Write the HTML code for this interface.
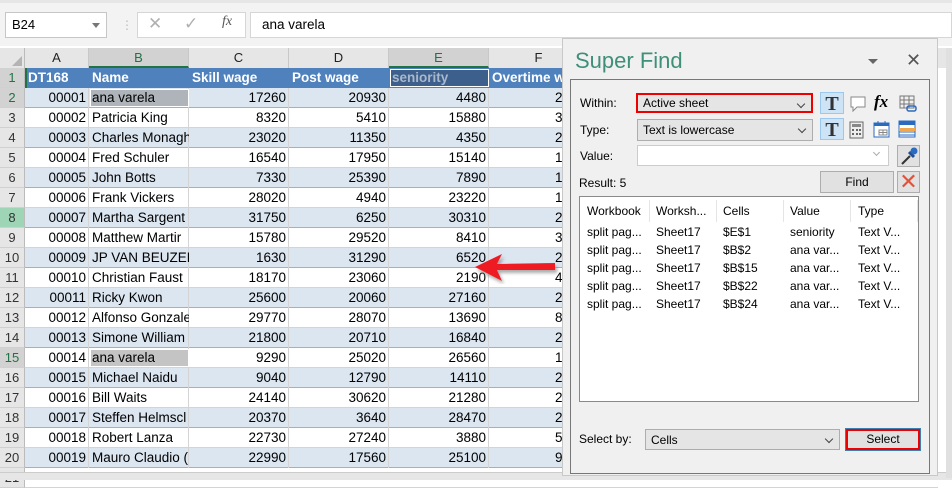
<!DOCTYPE html>
<html><head><meta charset="utf-8">
<style>
*{margin:0;padding:0;box-sizing:border-box}
body{width:952px;height:480px;overflow:hidden;background:#fff;font-family:"Liberation Sans",sans-serif;position:relative}
.a{position:absolute}
.cell{position:absolute;height:20px;line-height:20px;font-size:13.5px;color:#000;white-space:nowrap;overflow:hidden;padding:0 3px}
.r{text-align:right}
.rh{position:absolute;left:0;width:25px;height:20px;line-height:20px;text-align:center;font-size:13px;color:#333;background:#e6e6e6;border-bottom:1px solid #d0d0d0;border-right:1px solid #bbb}
.ch{position:absolute;top:48px;height:20px;line-height:20px;text-align:center;font-size:13px;color:#222;background:#e6e6e6;border-right:1px solid #c8c8c8}
.lbl{position:absolute;font-size:12px;color:#000}
.dd{position:absolute;background:#e5e5e5;border:1px solid #adadad;font-size:12px;line-height:20px;padding-left:5px;height:22px}
.dd:after{content:"";position:absolute;right:7px;top:6px;width:5px;height:5px;border-right:1px solid #444;border-bottom:1px solid #444;transform:rotate(45deg)}
.ib{position:absolute;width:24px;height:22px;text-align:center;font-family:"Liberation Serif",serif;font-weight:bold;font-size:20px;line-height:22px;color:#333}
.lt{position:absolute;font-size:12px;color:#000;white-space:nowrap}
</style></head><body>
<!-- ribbon/top -->
<div class="a" style="left:0;top:0;width:952px;height:46px;background:#f3f3f3"></div>
<div class="a" style="left:0;top:0;width:952px;height:3px;background:#e6e6e6"></div>
<div class="a" style="left:5px;top:12px;width:102px;height:26px;background:#fff;border:1px solid #c6c6c6;font-size:13px;line-height:24px;padding-left:6px">B24</div>
<div class="a" style="left:92px;top:23px;width:0;height:0;border-left:4px solid transparent;border-right:4px solid transparent;border-top:5px solid #777"></div>
<div class="a" style="left:121px;top:18px;color:#bbb;font-size:12px">⋮</div>
<div class="a" style="left:137px;top:12px;width:109px;height:26px;background:#fff;border:1px solid #d6d6d6"></div>
<div class="a" style="left:148px;top:14px;color:#b0b0b0;font-size:17px">✕</div>
<div class="a" style="left:184px;top:14px;color:#b0b0b0;font-size:17px">✓</div>
<div class="a" style="left:222px;top:14px;color:#555;font-size:14px;font-style:italic;font-family:'Liberation Serif',serif">fx</div>
<div class="a" style="left:250px;top:12px;width:702px;height:26px;background:#fff;border:1px solid #d6d6d6;font-size:13.5px;line-height:24px;padding-left:11px">ana varela</div>
<!-- column headers -->
<div class="a" style="left:0;top:48px;width:25px;height:20px;background:#e6e6e6;border-right:1px solid #bbb"></div>
<div class="a" style="left:12px;top:56px;width:0;height:0;border-left:10px solid transparent;border-bottom:10px solid #b4b4b4"></div>
<div class="ch" style="left:25px;width:64px">A</div>
<div class="ch" style="left:89px;width:100px;background:#d2d2d2;color:#217346;border-bottom:2px solid #217346">B</div>
<div class="ch" style="left:189px;width:100px">C</div>
<div class="ch" style="left:289px;width:100px">D</div>
<div class="ch" style="left:389px;width:100px;background:#d2d2d2;color:#217346;border-bottom:2px solid #217346">E</div>
<div class="ch" style="left:489px;width:100px">F</div>
<div class="ch" style="left:938px;width:14px"></div>
<div id="grid"></div>
<!-- header row 1 -->
<div class="a" style="left:25px;top:68px;width:540px;height:20px;background:#4f81bd"></div>
<div class="a" style="left:25px;top:68px;width:2px;height:400px;background:#217346"></div>
<div class="cell" style="left:25px;top:68px;color:#fff;font-weight:bold">DT168</div>
<div class="cell" style="left:89px;top:68px;color:#fff;font-weight:bold">Name</div>
<div class="cell" style="left:189px;top:68px;color:#fff;font-weight:bold">Skill wage</div>
<div class="cell" style="left:289px;top:68px;color:#fff;font-weight:bold">Post wage</div>
<div class="a" style="left:390px;top:69px;width:99px;height:18px;background:#3d5f8c;border:1px solid #fff"></div>
<div class="cell" style="left:389px;top:68px;color:#aab8cc;font-weight:bold">seniority</div>
<div class="cell" style="left:489px;top:68px;color:#fff;font-weight:bold">Overtime w</div>
<div id="rows"></div>
<script>
var d=[["00001","ana varela",17260,20930,4480,"2"],["00002","Patricia King",8320,5410,15880,"3"],["00003","Charles Monagh",23020,11350,4350,"2"],["00004","Fred Schuler",16540,17950,15140,"1"],["00005","John Botts",7330,25390,7890,"1"],["00006","Frank Vickers",28020,4940,23220,"1"],["00007","Martha Sargent",31750,6250,30310,"2"],["00008","Matthew Martir",15780,29520,8410,"3"],["00009","JP VAN BEUZEK(",1630,31290,6520,"2"],["00010","Christian Faust",18170,23060,2190,"4"],["00011","Ricky Kwon",25600,20060,27160,"2"],["00012","Alfonso Gonzale",29770,28070,13690,"8"],["00013","Simone William",21800,20710,16840,"2"],["00014","ana varela",9290,25020,26560,"1"],["00015","Michael Naidu",9040,12790,14110,"2"],["00016","Bill Waits",24140,30620,21280,"2"],["00017","Steffen Helmscl",20370,3640,28470,"2"],["00018","Robert Lanza",22730,27240,3880,"5"],["00019","Mauro Claudio (",22990,17560,25100,"9"]];
var h="";
h+='<div class="rh" style="top:68px;background:#d2d2d2;color:#217346">1</div>';
for(var i=0;i<20;i++){var n=i+2,t=68+(i+1)*20;
 var bg=(i%2==0)?"#dce6f1":"#fff";
 h+='<div class="a" style="left:25px;top:'+t+'px;width:913px;height:20px;background:'+(t<468?bg:"#fff")+';border-bottom:1px solid '+(i%2==0?"#95b3d7":"#d4d4d4")+'"></div>';
 var rs=(n==2||n==15)?"background:#d2d2d2;color:#217346":(n==8?"background:#9fd5b7;color:#333":"");
 h+='<div class="rh" style="top:'+t+'px;'+rs+'">'+n+'</div>';
 if(i<19){var r=d[i];
 [89,189,289,389,489].forEach(function(x){h+='<div class="a" style="left:'+(x-1)+'px;top:'+t+'px;width:1px;height:20px;background:#d4d4d4"></div>'});
 h+='<div class="cell r" style="left:25px;width:64px;top:'+t+'px">'+r[0]+'</div>';
 if(n==2||n==15)h+='<div class="a" style="left:90px;top:'+(t+1)+'px;width:99px;height:18px;background:'+(n==2?'#aeb4ba':'#c4c4c4')+';border:1px solid #fff"></div>';
 h+='<div class="cell" style="left:89px;width:100px;top:'+t+'px">'+r[1]+'</div>';
 h+='<div class="cell r" style="left:189px;width:100px;top:'+t+'px">'+r[2]+'</div>';
 h+='<div class="cell r" style="left:289px;width:100px;top:'+t+'px">'+r[3]+'</div>';
 h+='<div class="cell r" style="left:389px;width:100px;top:'+t+'px">'+r[4]+'</div>';
 h+='<div class="cell" style="left:555px;width:10px;padding:0;top:'+t+'px">'+r[5]+'</div>';}
}
h+='<div class="a" style="left:0;top:472px;width:952px;height:8px;background:#e6e6e6;border-top:1px solid #ccc"></div>';
document.getElementById("rows").innerHTML=h;
</script>
<!-- right strip gridlines -->
<div class="a" style="left:946px;top:48px;width:6px;height:430px;background:#e0e0e0"></div>
<!-- arrow -->
<svg class="a" style="left:470px;top:250px" width="95" height="36">
<defs><filter id="s"><feDropShadow dx="2" dy="3" stdDeviation="1.5" flood-color="#888" flood-opacity=".7"/></filter></defs>
<polygon filter="url(#s)" points="5,17 32,4 27,14 85,13 85,20 27,20 32,31" fill="#ee1c24"/>
</svg>
<!-- dialog -->
<div class="a" style="left:562px;top:38px;width:376px;height:438px;background:#f0f0f0;border:1px solid #c8c8c8"></div>
<div class="a" style="left:575px;top:48px;font-size:22px;color:#3f8f79">Super Find</div>
<div class="a" style="left:868px;top:59px;width:0;height:0;border-left:5px solid transparent;border-right:5px solid transparent;border-top:5px solid #666"></div>
<div class="a" style="left:906px;top:50px;font-size:18px;color:#555">✕</div>
<div class="a" style="left:570px;top:79px;width:360px;height:395px;border:1px solid #777"></div>
<div class="lbl" style="left:580px;top:96px">Within:</div>
<div class="dd" style="left:636px;top:93px;width:177px;height:20px;border:2px solid #e00;line-height:16px">Active sheet</div>
<div class="lbl" style="left:580px;top:123px">Type:</div>
<div class="dd" style="left:637px;top:119px;width:176px">Text is lowercase</div>
<div class="lbl" style="left:580px;top:149px">Value:</div>
<div class="a" style="left:637px;top:145px;width:252px;height:21px;background:#fff;border:1px solid #ccc"></div>
<div class="a" style="left:874px;top:150px;width:5px;height:5px;border-right:1px solid #aaa;border-bottom:1px solid #aaa;transform:rotate(45deg)"></div>
<div class="ib" style="left:820px;top:92px;background:#cde4f7;border:1px solid #9cc8ee">T</div>
<div class="ib" style="left:820px;top:118px;background:#cde4f7;border:1px solid #9cc8ee">T</div>
<svg class="a" style="left:849px;top:95px" width="18" height="18"><path d="M2 2h14v10H8l-4 4v-4H2z" fill="#fff" stroke="#888"/></svg>
<div class="a" style="left:874px;top:92px;font-family:'Liberation Serif',serif;font-style:italic;font-weight:bold;font-size:17px">fx</div>
<svg class="a" style="left:899px;top:95px" width="18" height="18"><path d="M1 1h14v12H1zM1 5h14M1 9h14M5 1v12M10 1v12" fill="none" stroke="#777"/><rect x="8" y="11" width="9" height="5" rx="2" fill="none" stroke="#2a6bbf" stroke-width="1.5"/></svg>
<svg class="a" style="left:849px;top:121px" width="16" height="18"><rect x="1" y="1" width="13" height="16" fill="#eee" stroke="#666"/><rect x="3" y="3" width="9" height="3" fill="#888"/><path d="M3 8h2v2H3zM7 8h2v2H7zM10 8h2v2h-2zM3 12h2v2H3zM7 12h2v2H7zM10 12h2v2h-2z" fill="#666"/></svg>
<svg class="a" style="left:873px;top:120px" width="18" height="18"><rect x="1" y="3" width="15" height="14" fill="#fff" stroke="#2a6bbf"/><rect x="1" y="3" width="15" height="3" fill="#2a6bbf"/><path d="M5 1v4M12 1v4" stroke="#2a6bbf"/><path d="M6 10h8v5H6zM10 10v5M6 12.5h8" fill="none" stroke="#888"/></svg>
<svg class="a" style="left:898px;top:120px" width="18" height="18"><rect x="1" y="1" width="16" height="16" fill="#fff" stroke="#2a6bbf"/><rect x="1" y="1" width="16" height="4" fill="#2a6bbf"/><rect x="1" y="8" width="16" height="3" fill="#f0a850"/><path d="M1 12h16M1 15h16" stroke="#2a6bbf"/></svg>
<div class="a" style="left:897px;top:145px;width:23px;height:22px;background:#e1e1e1;border:1px solid #adadad"></div>
<svg class="a" style="left:899px;top:147px" width="20" height="18"><path d="M3 17l8-8" stroke="#333" stroke-width="2"/><path d="M10 5l5 5" stroke="#1f4e99" stroke-width="3"/><circle cx="15" cy="4" r="3.5" fill="#2a6bbf"/></svg>
<div class="lbl" style="left:579px;top:176px">Result: 5</div>
<div class="a" style="left:820px;top:171px;width:74px;height:22px;background:#e1e1e1;border:1px solid #adadad;font-size:12px;text-align:center;line-height:20px">Find</div>
<div class="a" style="left:897px;top:171px;width:23px;height:22px;background:#e1e1e1;border:1px solid #adadad;color:#e0533a;font-size:22px;line-height:20px;text-align:center">✕</div>
<div class="a" style="left:579px;top:196px;width:340px;height:206px;background:#fff;border:1px solid #8a8a8a"></div>
<div class="a" style="left:649px;top:200px;width:1px;height:22px;background:#e5e5e5"></div>
<div class="a" style="left:716px;top:200px;width:1px;height:22px;background:#e5e5e5"></div>
<div class="a" style="left:783px;top:200px;width:1px;height:22px;background:#e5e5e5"></div>
<div class="a" style="left:850px;top:200px;width:1px;height:22px;background:#e5e5e5"></div>
<div class="a" style="left:917px;top:200px;width:1px;height:22px;background:#e5e5e5"></div>
<div class="lt" style="left:587px;top:204px">Workbook</div><div class="lt" style="left:656px;top:204px">Worksh...</div><div class="lt" style="left:723px;top:204px">Cells</div><div class="lt" style="left:790px;top:204px">Value</div><div class="lt" style="left:858px;top:204px">Type</div>
<div class="lt" style="left:587px;top:225px">split pag...</div><div class="lt" style="left:656px;top:225px">Sheet17</div><div class="lt" style="left:723px;top:225px">$E$1</div><div class="lt" style="left:790px;top:225px">seniority</div><div class="lt" style="left:858px;top:225px">Text V...</div>
<div class="lt" style="left:587px;top:243px">split pag...</div><div class="lt" style="left:656px;top:243px">Sheet17</div><div class="lt" style="left:723px;top:243px">$B$2</div><div class="lt" style="left:790px;top:243px">ana var...</div><div class="lt" style="left:858px;top:243px">Text V...</div>
<div class="lt" style="left:587px;top:261px">split pag...</div><div class="lt" style="left:656px;top:261px">Sheet17</div><div class="lt" style="left:723px;top:261px">$B$15</div><div class="lt" style="left:790px;top:261px">ana var...</div><div class="lt" style="left:858px;top:261px">Text V...</div>
<div class="lt" style="left:587px;top:279px">split pag...</div><div class="lt" style="left:656px;top:279px">Sheet17</div><div class="lt" style="left:723px;top:279px">$B$22</div><div class="lt" style="left:790px;top:279px">ana var...</div><div class="lt" style="left:858px;top:279px">Text V...</div>
<div class="lt" style="left:587px;top:297px">split pag...</div><div class="lt" style="left:656px;top:297px">Sheet17</div><div class="lt" style="left:723px;top:297px">$B$24</div><div class="lt" style="left:790px;top:297px">ana var...</div><div class="lt" style="left:858px;top:297px">Text V...</div>
<div class="lbl" style="left:579px;top:432px">Select by:</div>
<div class="dd" style="left:645px;top:429px;width:195px;height:21px">Cells</div>
<div class="a" style="left:846px;top:429px;width:74px;height:21px;background:#e1e1e1;border:2px solid #e00;box-shadow:0 0 0 1px #3c7fb1;font-size:12px;text-align:center;line-height:17px">Select</div>
</body></html>
